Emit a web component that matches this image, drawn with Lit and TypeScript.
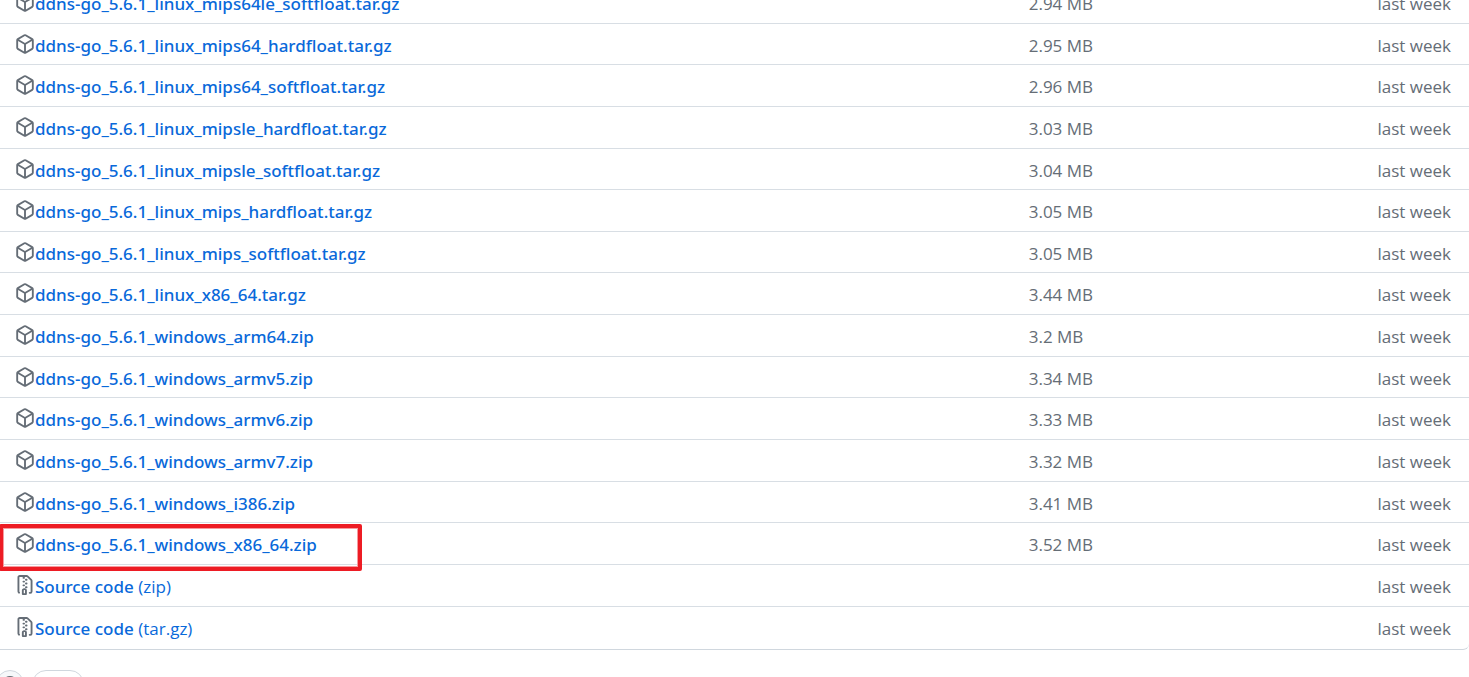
import { LitElement, html, css, svg } from "lit";
import { customElement } from "lit/decorators.js";

interface Asset {
  name: string;
  note?: string;
  size?: string;
  marked?: boolean;
}

const build = (target: string, size: string, marked = false): Asset => ({
  name: `ddns-go_5.6.1_${target}`,
  size,
  marked,
});

const ASSETS: Asset[] = [
  build("linux_mips64le_softfloat.tar.gz", "2.94 MB"),
  build("linux_mips64_hardfloat.tar.gz", "2.95 MB"),
  build("linux_mips64_softfloat.tar.gz", "2.96 MB"),
  build("linux_mipsle_hardfloat.tar.gz", "3.03 MB"),
  build("linux_mipsle_softfloat.tar.gz", "3.04 MB"),
  build("linux_mips_hardfloat.tar.gz", "3.05 MB"),
  build("linux_mips_softfloat.tar.gz", "3.05 MB"),
  build("linux_x86_64.tar.gz", "3.44 MB"),
  build("windows_arm64.zip", "3.2 MB"),
  build("windows_armv5.zip", "3.34 MB"),
  build("windows_armv6.zip", "3.33 MB"),
  build("windows_armv7.zip", "3.32 MB"),
  build("windows_i386.zip", "3.41 MB"),
  build("windows_x86_64.zip", "3.52 MB", true),
  { name: "Source code", note: "(zip)" },
  { name: "Source code", note: "(tar.gz)" },
];

const packageShape = svg`<path d="M8.878.392l5.25 3.045c.54.314.872.89.872 1.514v6.098a1.75 1.75 0 0 1-.872 1.514l-5.25 3.045a1.75 1.75 0 0 1-1.756 0l-5.25-3.045A1.75 1.75 0 0 1 1 11.049V4.951c0-.624.332-1.201.872-1.514L7.122.392a1.75 1.75 0 0 1 1.756 0ZM7.875 1.69l-4.63 2.685L8 7.133l4.755-2.758-4.63-2.685a.248.248 0 0 0-.25 0ZM2.5 5.677v5.372c0 .09.047.171.125.216l4.625 2.683V8.432Zm6.25 8.271 4.625-2.683a.25.25 0 0 0 .125-.216V5.677L8.75 8.432Z"/>`;

const zipShape = svg`<path d="M3.5 1.75v11.5c0 .09.048.173.126.217a.75.75 0 0 1-.752 1.298A1.748 1.748 0 0 1 2 13.25V1.75C2 .784 2.784 0 3.75 0h5.586c.464 0 .909.185 1.237.513l2.914 2.914c.329.328.513.773.513 1.237v8.586A1.75 1.75 0 0 1 12.25 15h-.5a.75.75 0 0 1 0-1.5h.5a.25.25 0 0 0 .25-.25V4.664a.25.25 0 0 0-.073-.177L9.513 1.573a.25.25 0 0 0-.177-.073H7.25a.75.75 0 0 1 0 1.5h-.5a.75.75 0 0 1 0-1.5h-3a.25.25 0 0 0-.25.25Zm3.75 8.75h.5c.966 0 1.75.784 1.75 1.75v3a.75.75 0 0 1-.75.75h-2.5a.75.75 0 0 1-.75-.75v-3c0-.966.784-1.75 1.75-1.75ZM6 5.25a.75.75 0 0 1 .75-.75h.5a.75.75 0 0 1 0 1.5h-.5A.75.75 0 0 1 6 5.25Zm.75 2.25h.5a.75.75 0 0 1 0 1.5h-.5a.75.75 0 0 1 0-1.5ZM8 6.75A.75.75 0 0 1 8.75 6h.5a.75.75 0 0 1 0 1.5h-.5A.75.75 0 0 1 8 6.75ZM8.75 3h.5a.75.75 0 0 1 0 1.5h-.5a.75.75 0 0 1 0-1.5ZM8 9.75A.75.75 0 0 1 8.75 9h.5a.75.75 0 0 1 0 1.5h-.5A.75.75 0 0 1 8 9.75Zm-1 2.5v2.25h1v-2.25a.25.25 0 0 0-.25-.25h-.5a.25.25 0 0 0-.25.25Z"/>`;

const smileyShape = svg`<g fill="none" stroke="currentColor" stroke-width="1.5" stroke-linecap="round"><circle cx="8" cy="8" r="7.25"/><path d="M5.3 10.2c1.3 1.6 4.1 1.6 5.4 0"/></g><circle cx="6" cy="6.5" r="1"/><circle cx="10" cy="6.5" r="1"/>`;

@customElement("app-root")
export class AppRoot extends LitElement {
  static styles = css`
    :host {
      display: block;
      height: 100vh;
      overflow: hidden;
      background: #fff;
      color: #656d76;
      font-family: "Open Sans", "Noto Sans", sans-serif;
      font-size: 17px;
      line-height: 1.45;
    }
    .assets {
      list-style: none;
      margin: -18px 0 0;
      padding: 0;
      border-bottom: 1px solid #d0d7de;
      border-bottom-right-radius: 6px;
    }
    .row {
      position: relative;
      display: grid;
      grid-template-columns: minmax(0, 1013fr) minmax(0, 422fr);
      padding: 10px 18px 6px 15px;
      border-bottom: 1px solid #d8dee4;
    }
    .row:last-child {
      padding-bottom: 8px;
      border-bottom: none;
    }
    .file {
      display: flex;
      min-width: 0;
    }
    .icon {
      flex: none;
      width: 20px;
      height: 20px;
      fill: currentColor;
    }
    .link {
      color: #0969da;
      text-decoration: none;
      white-space: nowrap;
    }
    .name {
      font-family: "Noto Sans", "Open Sans", sans-serif;
      font-weight: 500;
    }
    .meta {
      display: flex;
      justify-content: space-between;
      white-space: nowrap;
    }
    .mark {
      position: absolute;
      top: 1px;
      left: -1px;
      width: 363px;
      height: 47px;
      box-sizing: border-box;
      border: 4px solid #ed1c24;
      border-radius: 2px;
      box-shadow: inset 0 0 0 1px #f69a9e;
      z-index: 1;
      pointer-events: none;
    }
    .reactions {
      display: flex;
      gap: 8px;
      margin-top: 20px;
      margin-left: -4px;
    }
    .pill {
      box-sizing: border-box;
      height: 28px;
      padding: 0;
      border: 1px solid #d0d7de;
      border-radius: 14px;
      background: #fff;
      color: #656d76;
    }
    .add {
      display: grid;
      place-items: center;
      width: 28px;
      background: #f6f8fa;
    }
    .add svg {
      width: 16px;
      height: 16px;
      fill: currentColor;
    }
    .count {
      width: 52px;
    }
  `;

  private row(asset: Asset) {
    return html`
      <li class="row">
        <div class="file">
          <svg class="icon" viewBox="0 0 16 16" aria-hidden="true">
            ${asset.note ? zipShape : packageShape}
          </svg>
          <a class="link" href="#"
            ><span class="name">${asset.name}</span>${asset.note ? html` <span>${asset.note}</span>` : ""}</a
          >
        </div>
        <div class="meta">
          <span>${asset.size ?? ""}</span>
          <span>last week</span>
        </div>
        ${asset.marked ? html`<span class="mark"></span>` : ""}
      </li>
    `;
  }

  render() {
    return html`
      <ul class="assets">
        ${ASSETS.map((asset) => this.row(asset))}
      </ul>
      <div class="reactions">
        <button class="pill add" aria-label="Add reaction">
          <svg viewBox="0 0 16 16" aria-hidden="true">${smileyShape}</svg>
        </button>
        <button class="pill count" aria-label="Reactions"></button>
      </div>
    `;
  }
}
